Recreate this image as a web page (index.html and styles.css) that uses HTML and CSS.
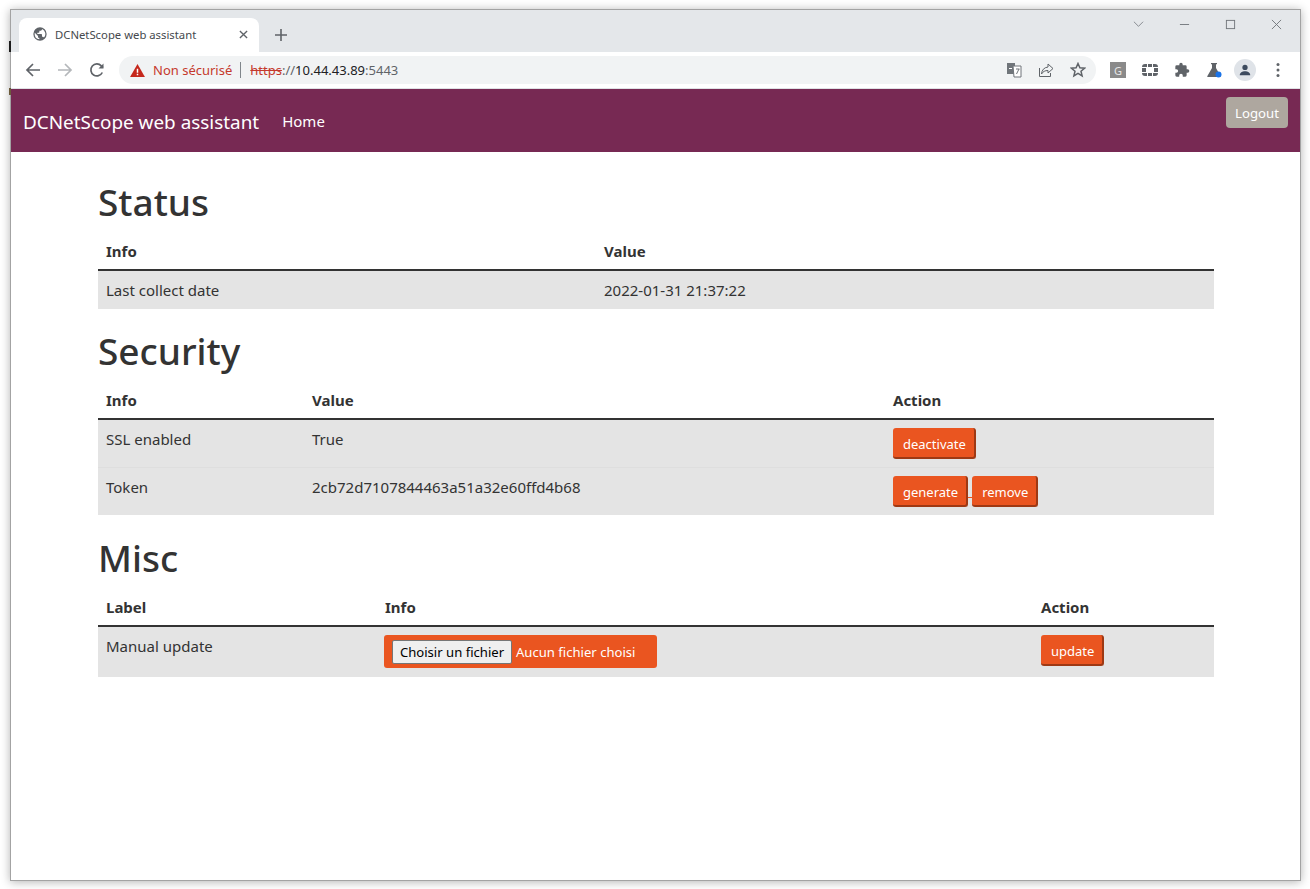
FILE: index.html
```html
<!DOCTYPE html>
<html lang="fr">
<head>
<meta charset="utf-8">
<title>DCNetScope web assistant</title>
<link rel="stylesheet" href="styles.css">
</head>
<body>
<div class="window">
  <div class="tabstrip">
    <div class="tab">
      <svg class="favicon" viewBox="0 0 24 24"><path fill="#5f6368" d="M12 2a10 10 0 1 0 0 20 10 10 0 0 0 0-20zM4 12c0-.6.1-1.200.2-1.800L9 15v1c0 1.100.9 2 2 2v2a8 8 0 0 1-7-8zm13.900 5.400c-.3-.8-1-1.400-1.900-1.400h-1v-3c0-.6-.4-1-1-1H8v-2h2c.6 0 1-.4 1-1V7h2c1.100 0 2-.9 2-2v-.4a8 8 0 0 1 2.900 12.800z"/></svg>
      <span class="tab-title">DCNetScope web assistant</span>
      <svg class="tab-close" viewBox="0 0 10 10"><path d="M1 1l8 8M9 1l-8 8" stroke="#5f6368" stroke-width="1.500" fill="none"/></svg>
    </div>
    <svg class="newtab" viewBox="0 0 12 12"><path d="M6 0v12M0 6h12" stroke="#5f6368" stroke-width="1.600" fill="none"/></svg>
    <div class="winctl">
      <svg class="ctl ctl-chev" viewBox="0 0 12 8"><path d="M1 1l5 5 5-5" stroke="#80868b" fill="none"/></svg>
      <svg class="ctl ctl-min" viewBox="0 0 12 12"><path d="M1 6h10" stroke="#70757a" fill="none"/></svg>
      <svg class="ctl ctl-max" viewBox="0 0 12 12"><rect x="1.500" y="1.500" width="9" height="9" stroke="#70757a" fill="none"/></svg>
      <svg class="ctl ctl-x" viewBox="0 0 12 12"><path d="M1 1l10 10M11 1L1 11" stroke="#70757a" fill="none"/></svg>
    </div>
  </div>
  <div class="toolbar">
    <svg class="navicon" viewBox="0 0 16 16"><path d="M15 8H2M8 2L2 8l6 6" stroke="#5f6368" stroke-width="1.700" fill="none"/></svg>
    <svg class="navicon dim" viewBox="0 0 16 16"><path d="M1 8h13M8 2l6 6-6 6" stroke="#b4b7ba" stroke-width="1.700" fill="none"/></svg>
    <svg class="navicon" viewBox="0 0 16 16"><path d="M13.300 10.500A6 6 0 1 1 12.300 3.800L14 5.500" stroke="#5f6368" stroke-width="1.700" fill="none"/><path d="M14.500 1.500v5h-5z" fill="#5f6368"/></svg>
    <div class="omnibox">
      <svg class="warn" viewBox="0 0 16 14"><path d="M8 0l8 14H0z" fill="#c5281c"/><path d="M7.200 5h1.600v4.500H7.200zM7.200 10.500h1.600V12H7.200z" fill="#fff"/></svg>
      <span class="notsecure">Non sécurisé</span>
      <span class="omni-sep"></span>
      <span class="url"><s class="https">https</s><span class="url-dim">://</span><span class="url-host">10.44.43.89</span><span class="url-dim">:5443</span></span>
      <span class="omni-actions">
        <svg class="ticon" viewBox="0 0 16 16"><path d="M1 1h8v11H1z" fill="#70757a"/><path d="M7 4h8v11H8z" fill="#fff" stroke="#70757a"/><path d="M3 6.500h3" stroke="#fff"/><path d="M10 7h3.500M10.500 12l2.500-5" stroke="#70757a"/></svg>
        <svg class="ticon" viewBox="0 0 16 16"><path d="M1.500 6v8.500h11V11" stroke="#5f6368" fill="none"/><path d="M10 2l5 4.500L10 11V8.500C7 8.500 5 9.500 3.500 12c.3-4 2.500-6.500 6.500-7z" stroke="#5f6368" fill="none"/></svg>
        <svg class="ticon" viewBox="0 0 16 16"><path d="M8 1.500l1.900 4.300 4.600.4-3.500 3 1.100 4.600L8 11.300l-4.100 2.500L5 9.200l-3.500-3 4.600-.4z" stroke="#5f6368" stroke-width="1.500" fill="none"/></svg>
      </span>
    </div>
    <div class="extensions">
      <span class="ext-g">G</span>
      <svg class="ext" viewBox="0 0 16 12"><path fill="#5f6368" d="M3 0h2v3H0a3 3 0 0 1 3-3zM6 0h4v3H6zM11 0h2a3 3 0 0 1 3 3h-5zM0 4h4v4H0zM12 4h4v4h-4zM0 9h5v3H3a3 3 0 0 1-3-3zM6 9h4v3H6zM11 9h5a3 3 0 0 1-3 3h-2z"/></svg>
      <svg class="ext" viewBox="0 0 24 24"><path fill="#5f6368" d="M20.500 11H19V7a2 2 0 0 0-2-2h-4V3.500a2.500 2.500 0 0 0-5 0V5H4a2 2 0 0 0-2 2v3.800h1.500a2.700 2.700 0 0 1 0 5.400H2V20a2 2 0 0 0 2 2h3.800v-1.500a2.700 2.700 0 0 1 5.400 0V22H17a2 2 0 0 0 2-2v-4h1.500a2.500 2.500 0 0 0 0-5z"/></svg>
      <svg class="ext" viewBox="0 0 16 16"><path fill="#5f6368" d="M5 1h6v1.200h-1V6l4.500 8c.3.600-.1 1-.6 1H2c-.6 0-1-.5-.6-1L6 6V2.200H5z"/><circle cx="12.500" cy="12.500" r="3" fill="#1a73e8"/></svg>
      <span class="avatar"><svg viewBox="0 0 16 16"><circle cx="8" cy="5" r="3" fill="#3c4a5e"/><path d="M2 14c0-3 3-4.500 6-4.500s6 1.500 6 4.500z" fill="#3c4a5e"/></svg></span>
      <svg class="ext kebab" viewBox="0 0 4 16"><circle cx="2" cy="2.500" r="1.500" fill="#5f6368"/><circle cx="2" cy="8" r="1.500" fill="#5f6368"/><circle cx="2" cy="13.500" r="1.500" fill="#5f6368"/></svg>
    </div>
  </div>
  <nav class="navbar">
    <span class="brand">DCNetScope web assistant</span>
    <span class="nav-link">Home</span>
    <span class="logout">Logout</span>
  </nav>
  <main class="content">
    <h1>Status</h1>
    <table class="t-status">
      <colgroup><col class="c1"><col></colgroup>
      <thead><tr><th>Info</th><th>Value</th></tr></thead>
      <tbody><tr><td>Last collect date</td><td>2022-01-31 21:37:22</td></tr></tbody>
    </table>
    <h1>Security</h1>
    <table class="t-security">
      <colgroup><col class="c1"><col class="c2"><col></colgroup>
      <thead><tr><th>Info</th><th>Value</th><th>Action</th></tr></thead>
      <tbody>
        <tr><td>SSL enabled</td><td>True</td><td><span class="btn">deactivate</span></td></tr>
        <tr><td>Token</td><td>2cb72d7107844463a51a32e60ffd4b68</td><td><span class="btn-row"><span class="btn">generate</span><span class="btn-link"></span><span class="btn">remove</span></span></td></tr>
      </tbody>
    </table>
    <h1>Misc</h1>
    <table class="t-misc">
      <colgroup><col class="c1"><col class="c2"><col></colgroup>
      <thead><tr><th>Label</th><th>Info</th><th>Action</th></tr></thead>
      <tbody>
        <tr><td>Manual update</td><td><span class="file"><span class="file-btn">Choisir un fichier</span><span class="file-name">Aucun fichier choisi</span></span></td><td><span class="btn">update</span></td></tr>
      </tbody>
    </table>
  </main>
</div>
</body>
</html>
```
FILE: styles.css
```css
* { box-sizing: border-box; }
html, body { height: 100%; }
body {
  margin: 0;
  padding: 9px 9px 8px 10px;
  background: #fff;
  font-family: "Noto Sans", "Open Sans", sans-serif;
  overflow: hidden;
}
.window {
  position: relative;
  height: 100%;
  border: 1px solid #a3a3a3;
  box-shadow: 0 1px 9px rgba(0,0,0,.3);
  background: #fff;
  display: flex;
  flex-direction: column;
}
.window::before, .window::after {
  content: "";
  position: absolute;
  left: -2px;
  width: 2px;
  background: #1c1c1c;
}
.window::before { top: 31px; height: 11px; }
.window::after { top: 78px; height: 7px; background: #6b5a3a; }
.tabstrip {
  height: 42px;
  background: #e4e7ea;
  display: flex;
  align-items: flex-end;
  padding-left: 8px;
  flex: none;
}
.tab {
  width: 240px;
  height: 34px;
  background: #fff;
  border-radius: 8px 8px 0 0;
  display: flex;
  align-items: center;
  padding: 0 11px 2px 13px;
  font-size: 11.3px;
  color: #45494d;
}
.favicon { width: 16px; height: 16px; flex: none; }
.tab-title { margin-left: 7px; flex: 1; white-space: nowrap; }
.tab-close { width: 9px; height: 9px; flex: none; }
.newtab { width: 12px; height: 12px; margin: 0 0 11px 16px; flex: none; }
.winctl { margin-left: auto; align-self: flex-start; display: flex; align-items: center; height: 28px; }
.ctl { width: 11px; height: 11px; flex: none; }
.ctl-chev { margin-right: 35px; }
.ctl-min { margin-right: 35px; }
.ctl-max { margin-right: 35px; }
.ctl-x { margin-right: 18px; }
.toolbar {
  height: 37px;
  flex: none;
  display: flex;
  align-items: center;
  padding-left: 14px;
  background: #fff;
  border-bottom: 1px solid #dfe1e5;
}
.navicon { width: 16px; height: 16px; flex: none; margin-right: 16px; }
.omnibox {
  width: 977px;
  height: 28px;
  margin-left: -2px;
  background: #f1f3f4;
  border-radius: 14px;
  display: flex;
  align-items: center;
  padding-left: 11px;
  font-size: 13px;
  flex: none;
}
.warn { width: 15px; height: 13px; flex: none; }
.notsecure { color: #c5392c; margin-left: 8px; white-space: nowrap; }
.omni-sep { width: 1px; height: 16px; background: #80868b; margin: 0 9px 0 8px; flex: none; }
.url { white-space: nowrap; color: #202124; }
.https { color: #c5392c; }
.url-dim { color: #5f6368; }
.omni-actions { margin-left: auto; display: flex; align-items: center; gap: 16px; padding-right: 10px; }
.ticon { width: 16px; height: 16px; flex: none; display: block; }
.extensions { display: flex; align-items: center; margin-left: 14px; gap: 16px; }
.ext { width: 16px; height: 16px; flex: none; }
.ext-g {
  width: 16px; height: 16px;
  background: #8a8a8a;
  color: #e8e8e8;
  font-size: 11px;
  display: flex; align-items: center; justify-content: center;
  flex: none;
}
.avatar {
  width: 22px; height: 22px;
  background: #dfe3e8;
  border-radius: 50%;
  display: flex; align-items: center; justify-content: center;
  margin: 0 -3px 0 -4px;
  flex: none;
}
.avatar svg { width: 14px; height: 14px; }
.kebab { width: 4px; margin-left: 7px; }
.navbar {
  height: 63px;
  flex: none;
  background: #772953;
  display: flex;
  align-items: flex-start;
  padding: 8px 12px 0 12px;
  color: #fff;
}
.brand { font-size: 18.9px; line-height: 27px; margin-top: 12px; white-space: nowrap; }
.nav-link { font-size: 15px; line-height: 24px; margin: 12px 0 0 23px; }
.logout {
  margin-left: auto;
  height: 31px;
  width: 62px;
  background: #aea79f;
  border-radius: 4px;
  font-size: 13.2px;
  display: flex; align-items: center; justify-content: center;
}
.content {
  flex: 1;
  padding: 26px 86px 0 87px;
  color: #333;
  font-size: 15px;
}
h1 {
  margin: 0 0 6px;
  font-size: 37px;
  font-weight: 500;
  line-height: 48px;
}
table {
  width: 100%;
  border-collapse: collapse;
  table-layout: fixed;
  margin-bottom: 18px;
  line-height: 24px;
}
.t-security { margin-bottom: 19px; }
th { text-align: left; font-weight: 700; padding: 7px 8px 6px; border-bottom: 2px solid #333; }
td { padding: 7px 8px; vertical-align: top; background: #e4e4e4; border-top: 1px solid #dedede; }
tbody tr:first-child td { border-top: 0; }
.t-status .c1 { width: 498px; }
.t-security .c1 { width: 206px; }
.t-security .c2 { width: 581px; }
.t-misc .c1 { width: 279px; }
.t-misc .c2 { width: 656px; }
.btn {
  display: inline-block;
  height: 31px;
  margin: 1px 0;
  padding: 0 8px 0 10px;
  line-height: 32px;
  font-size: 13px;
  color: #fff;
  background: #ea5520;
  border-radius: 3px;
  border-right: 2px solid #9e3914;
  border-bottom: 2px solid #9e3914;
  vertical-align: top;
}
.btn-row { display: flex; align-items: flex-start; }
.btn-link { width: 4px; height: 1px; background: #ea5520; margin-top: 22px; }
.file {
  display: inline-flex;
  align-items: center;
  width: 273px;
  height: 33px;
  margin: 1px 0 2px -1px;
  padding-left: 8px;
  background: #ea5520;
  border-radius: 3px;
  color: #fff;
  font-size: 13.1px;
  vertical-align: top;
}
.file-btn {
  width: 120px;
  height: 24px;
  background: #efefef;
  border: 1px solid #767676;
  border-radius: 2px;
  color: #000;
  text-align: center;
  line-height: 22px;
}
.file-name { margin-left: 4px; }
```
